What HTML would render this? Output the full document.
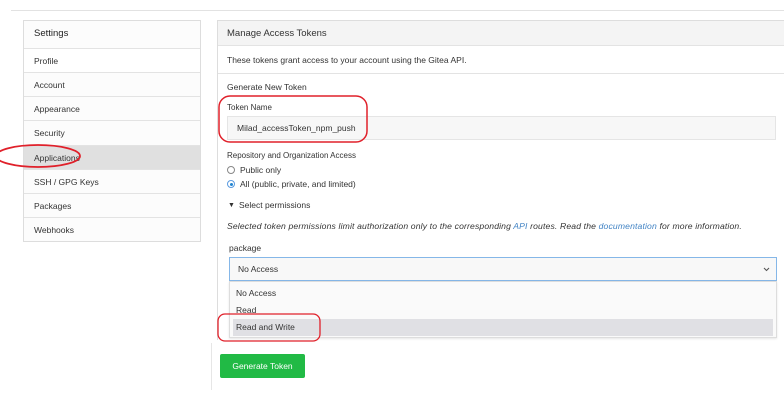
<!DOCTYPE html>
<html><head><meta charset="utf-8"><style>
*{box-sizing:border-box;margin:0;padding:0}
body{width:784px;height:400px;background:#fff;position:relative;overflow:hidden;font-family:"Liberation Sans",sans-serif;font-size:8.5px;color:#333}
.a{position:absolute;white-space:nowrap}
.side{position:absolute;left:23px;top:20px;width:178px;height:222px;border:1px solid #ddd;background:#fcfcfc}
.si{position:absolute;left:0;width:176px;height:24px;border-top:1px solid #e3e3e3;padding-left:10px;line-height:24px}
.main{position:absolute;left:217px;top:20px;width:580px;height:320px;border:1px solid #ddd;border-bottom:none;background:#fff}
</style></head><body>
<div class="a" style="left:11px;top:10px;width:773px;height:1px;background:#e2e2e2"></div>
<div class="side">
 <div class="a" style="left:10px;top:7px;font-size:9.5px;color:#222">Settings</div>
 <div class="si" style="top:27px;background:#fff">Profile</div>
 <div class="si" style="top:51px">Account</div>
 <div class="si" style="top:75px">Appearance</div>
 <div class="si" style="top:99px">Security</div>
 <div class="si" style="top:124px;background:#e0e0e0">Applications</div>
 <div class="si" style="top:148px">SSH / GPG Keys</div>
 <div class="si" style="top:172px">Packages</div>
 <div class="si" style="top:196px">Webhooks</div>
</div>
<div class="main">
 <div class="a" style="left:0;top:0;width:580px;height:25px;background:#f4f4f4;border-bottom:1px solid #e3e3e3"></div>
 <div class="a" style="left:9px;top:7px;font-size:9.5px;color:#333">Manage Access Tokens</div>
 <div class="a" style="left:9px;top:34px">These tokens grant access to your account using the Gitea API.</div>
 <div class="a" style="left:0;top:52px;width:580px;height:1px;background:#e3e3e3"></div>
 <div class="a" style="left:9px;top:61px">Generate New Token</div>
 <div class="a" style="left:9px;top:82px;font-size:8px">Token Name</div>
 <div class="a" style="left:9px;top:95px;width:549px;height:24px;background:#f7f7f7;border:1px solid #e5e5e5;padding-left:9px;line-height:22px">Milad_accessToken_npm_push</div>
 <div class="a" style="left:9px;top:130px;font-size:8px">Repository and Organization Access</div>
 <div class="a" style="left:9px;top:145px;width:8px;height:8px;border:1px solid #888;border-radius:50%"></div>
 <div class="a" style="left:22px;top:144px">Public only</div>
 <div class="a" style="left:9px;top:159px;width:8px;height:8px;border:1px solid #5b9be0;border-radius:50%;background:#fff"><div style="margin:1.5px;width:3px;height:3px;border-radius:50%;background:#2185d0"></div></div>
 <div class="a" style="left:22px;top:158px">All (public, private, and limited)</div>
 <div class="a" style="left:10px;top:181px;font-size:7px">▼</div>
 <div class="a" style="left:21px;top:179px">Select permissions</div>
 <div class="a" style="left:9px;top:200px;font-style:italic;font-size:8.6px;letter-spacing:0.15px">Selected token permissions limit authorization only to the corresponding <span style="color:#4183c4">API</span> routes. Read the <span style="color:#4183c4">documentation</span> for more information.</div>
 <div class="a" style="left:11px;top:222px">package</div>
 <div class="a" style="left:11px;top:236px;width:548px;height:24px;border:1px solid #85b7e8;background:#f8f8f8;padding-left:8px;line-height:22px">No Access<svg style="position:absolute;right:6px;top:9px" width="7" height="5"><path d="M1 1 L3.5 3.5 L6 1" fill="none" stroke="#555" stroke-width="1.1"/></svg></div>
 <div class="a" style="left:11px;top:260px;width:548px;height:57px;border:1px solid #ddd;background:#fafafa;box-shadow:0 1px 2px rgba(0,0,0,.1)">
  <div class="a" style="left:6px;top:6px">No Access</div>
  <div class="a" style="left:6px;top:23px">Read</div>
  <div class="a" style="left:3px;top:37px;width:540px;height:17px;background:#e0e0e4"></div>
  <div class="a" style="left:6px;top:40px">Read and Write</div>
 </div>
</div>
<div class="a" style="left:211px;top:343px;width:1px;height:47px;background:#e6e6e6"></div>
<div class="a" style="left:220px;top:354px;width:85px;height:24px;background:#21ba45;border-radius:2px;color:#fff;text-align:center;line-height:24px">Generate Token</div>
<svg class="a" style="left:0;top:0" width="784" height="400">
 <rect x="219" y="96" width="148" height="46" rx="11" fill="none" stroke="#e0202a" stroke-width="1.5"/>
 <ellipse cx="38" cy="156" rx="42" ry="11" fill="none" stroke="#e0202a" stroke-width="1.8"/>
 <rect x="218" y="314" width="102" height="27" rx="7" fill="none" stroke="#e0202a" stroke-width="1.3"/>
</svg>
</body></html>
